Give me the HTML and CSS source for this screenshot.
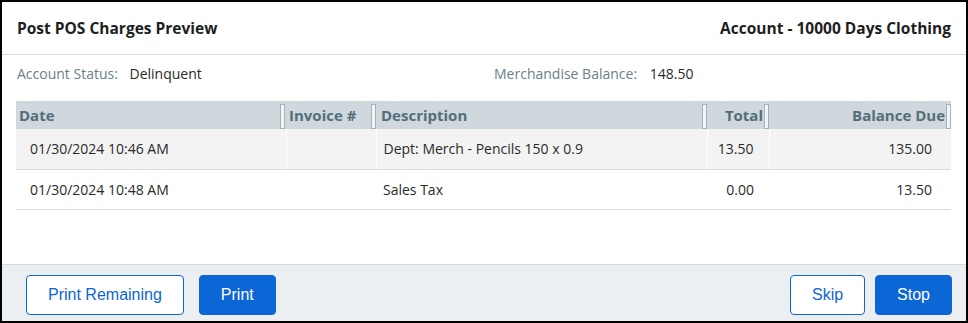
FILE: index.html
```html
<!DOCTYPE html>
<html>

<head>
    <link rel="stylesheet" href="styles.css">
</head>

<body>

    <div class="dialog">
        <div class="dialog-header">
            <h2>Post POS Charges Preview</h2>
            <h2>Account - 10000 Days Clothing</h2>
        </div>

        <div class="info">
            <div class="info-item">
                <span class="info-label">Account Status:</span>
                <span class="info-value">Delinquent</span>
            </div>
            <div class="info-item info-item-wide">
                <span class="info-label">Merchandise Balance:</span>
                <span class="info-value">148.50</span>
            </div>
        </div>

        <table class="charges">
            <colgroup>
                <col class="col-date">
                <col class="col-invoice">
                <col class="col-desc">
                <col class="col-total">
                <col class="col-balance">
            </colgroup>
            <thead>
                <tr>
                    <th>Date</th>
                    <th>Invoice #</th>
                    <th class="th-desc">Description</th>
                    <th class="num">Total</th>
                    <th class="num">Balance Due</th>
                </tr>
            </thead>
            <tbody>
                <tr class="alt">
                    <td class="td-date">01/30/2024 10:46 AM</td>
                    <td></td>
                    <td class="td-desc">Dept: Merch - Pencils 150 x 0.9</td>
                    <td class="num td-total">13.50</td>
                    <td class="num td-balance">135.00</td>
                </tr>
                <tr>
                    <td class="td-date">01/30/2024 10:48 AM</td>
                    <td></td>
                    <td class="td-desc">Sales Tax</td>
                    <td class="num td-total">0.00</td>
                    <td class="num td-balance">13.50</td>
                </tr>
            </tbody>
        </table>

        <div class="dialog-footer">
            <div class="btn-group">
                <button class="btn btn-outline">Print Remaining</button>
                <button class="btn btn-primary">Print</button>
            </div>
            <div class="btn-group btn-group-tight">
                <button class="btn btn-outline">Skip</button>
                <button class="btn btn-primary">Stop</button>
            </div>
        </div>
    </div>

</body>

</html>
```

FILE: styles.css
```css
* {
    box-sizing: border-box;
}

body {
    margin: 0;
    font-family: "Open Sans", "Noto Sans", sans-serif;
    font-size: 14px;
    color: #2a2a2a;
    background-color: #fff;
}

.dialog {
    width: 968px;
    height: 323px;
    border: 2px solid #000;
    display: flex;
    flex-direction: column;
}

.dialog-header {
    height: 53px;
    padding: 0 15px 0 15px;
    display: flex;
    justify-content: space-between;
    align-items: center;
    border-bottom: 1px solid #d5dadd;
}

h2 {
    margin: 0;
    font-size: 15.5px;
    font-weight: bold;
    color: #1e1e1e;
}

.info {
    display: flex;
    padding: 10px 16px 0 15px;
    height: 46px;
}

.info-item {
    width: 477px;
    flex-shrink: 0;
    line-height: 18px;
}

.info-item-wide {
    width: auto;
    flex: 1;
}

.info-label {
    color: #6a7f8c;
    margin-right: 8px;
}

.info-item-wide .info-label {
    margin-right: 9px;
}

.info-value {
    color: #2a2a2a;
}

/* tabel */
.charges {
    margin: 0 15px 0 14px;
    border-collapse: collapse;
    table-layout: fixed;
    width: 935px;
}

.col-date { width: 270px; }
.col-invoice { width: 90px; }
.col-desc { width: 331px; }
.col-total { width: 62px; }
.col-balance { width: 182px; }

.charges th {
    position: relative;
    height: 28px;
    padding: 0 6px 0 3px;
    background-color: #cfd8dc;
    color: #546e7a;
    font-weight: bold;
    font-size: 15px;
    text-align: left;
    white-space: nowrap;
}

.charges th::after {
    content: "";
    position: absolute;
    right: 0;
    top: 3px;
    width: 3px;
    height: 23px;
    border: 1px solid #a7b2b8;
    background-color: #f2f4f5;
}

.charges th:first-child::after {
    right: 1px;
}

.charges th.th-desc {
    padding-left: 5px;
}

.charges .num {
    text-align: right;
}

.charges td {
    height: 40px;
    padding: 0 6px;
    border-bottom: 1px solid #d6dde1;
    white-space: nowrap;
}

.charges tr.alt td {
    background-color: #f3f3f3;
    border-left: 1px solid #fff;
}

.charges tr.alt td:first-child {
    border-left: none;
}

.charges td.td-date {
    padding-left: 14px;
}

.charges td.td-desc {
    padding-left: 7px;
}

.charges td.td-total {
    padding-right: 15px;
}

.charges td.td-balance {
    padding-right: 19px;
}

/* tombol bawah */
.dialog-footer {
    margin-top: auto;
    height: 57px;
    padding: 10px 14px 0 24px;
    display: flex;
    justify-content: space-between;
    align-items: flex-start;
    background-color: #eceff1;
    border-top: 1px solid #d3d9dc;
}

.btn-group {
    display: flex;
    gap: 15px;
}

.btn-group-tight {
    gap: 10px;
}

.btn {
    height: 40px;
    padding: 0 21px;
    border-radius: 4px;
    font-family: "Liberation Sans", Arial, sans-serif;
    font-size: 16px;
    cursor: pointer;
}

.btn-outline {
    background-color: #fff;
    color: #0b66d6;
    border: 1px solid #0b66d6;
}

.btn-primary {
    background-color: #0b66d6;
    color: #fff;
    border: 1px solid #0b66d6;
}
```
